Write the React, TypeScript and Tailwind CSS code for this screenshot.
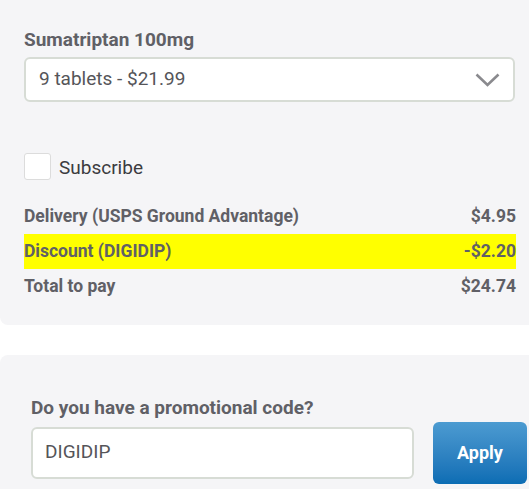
import React from "react";

export default function App() {
  return (
    <div
      className="relative w-[529px] h-[489px] overflow-hidden bg-white"
      style={{ fontFamily: "Roboto, 'Liberation Sans', sans-serif" }}
    >
      <div className="w-[560px] bg-[#f5f5f7] rounded-bl-lg pl-[24px] pr-[44px] pt-[28px] pb-[21px]">
        <div className="text-[19px] leading-[24px] font-bold text-[#606066]">Sumatriptan 100mg</div>
        <div className="mt-[5px] h-[45px] w-[491px] bg-white border-2 border-[#d7dcd5] rounded-[6px] flex items-center justify-between pl-[13px] pr-[13px]">
          <span className="text-[19px] text-[#555559]">9 tablets - $21.99</span>
          <svg width="25" height="14" viewBox="0 0 25 14" fill="none">
            <path d="M1.5 1.5 L12.5 12 L23.5 1.5" stroke="#8a8a8e" strokeWidth="2.6" />
          </svg>
        </div>
        <div className="mt-[50px] flex items-center gap-[8px]">
          <div className="w-[27px] h-[27px] bg-white border border-[#dcdcdc] rounded-[3px]" />
          <span className="text-[19px] text-[#3b3b40] relative top-[2px]">Subscribe</span>
        </div>
        <div className="mt-[18px] w-[492px] text-[17.5px] font-bold text-[#606066]">
          <div className="h-[35px] flex items-center justify-between">
            <span>Delivery (USPS Ground Advantage)</span>
            <span>$4.95</span>
          </div>
          <div className="h-[35px] flex items-center justify-between bg-[#ffff00]">
            <span>Discount (DIGIDIP)</span>
            <span>-$2.20</span>
          </div>
          <div className="h-[35px] flex items-center justify-between">
            <span>Total to pay</span>
            <span>$24.74</span>
          </div>
        </div>
      </div>
      <div className="mt-[30px] w-[560px] h-[200px] bg-[#f5f5f7] rounded-tl-lg pl-[31px] pt-[41px]">
        <div className="text-[19px] leading-[24px] font-bold text-[#606066]">Do you have a promotional code?</div>
        <div className="mt-[2px] flex items-center gap-[19px]">
          <div className="h-[52px] w-[383px] bg-white border-2 border-[#d7dcd5] rounded-[6px] flex items-center pl-[12px]">
            <span className="text-[19px] text-[#555559]">DIGIDIP</span>
          </div>
          <div className="h-[62px] w-[94px] rounded-[6px] bg-gradient-to-b from-[#4c9bd1] to-[#0b6db4] flex items-center justify-center">
            <span className="text-[18px] font-bold text-white">Apply</span>
          </div>
        </div>
      </div>
    </div>
  );
}
